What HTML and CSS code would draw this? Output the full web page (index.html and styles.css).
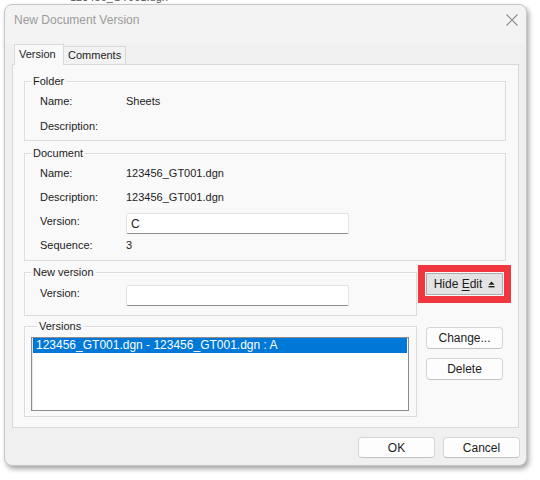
FILE: index.html
```html
<!DOCTYPE html>
<html>
<head>
<meta charset="utf-8">
<title>New Document Version</title>
<link rel="stylesheet" href="styles.css">
</head>
<body>
<div class="desk-text"><span>123456_GT001.dgn</span></div>
<div class="dialog">
  <div class="titlebar">
    <span class="title">New Document Version</span>
    <svg class="close" width="12" height="12" viewBox="0 0 12 12"><path d="M0.5 0.5L11.5 11.5M11.5 0.5L0.5 11.5" stroke="#8c8c8c" stroke-width="1.1" fill="none"/></svg>
  </div>
  <div class="tabs">
    <div class="tab active">Version</div>
    <div class="tab">Comments</div>
  </div>
  <div class="panel">
    <div class="group folder">
      <div class="legend">Folder</div>
      <div class="row h25"><span class="lbl">Name:</span><span class="val">Sheets</span></div>
      <div class="row h25"><span class="lbl">Description:</span><span class="val"></span></div>
    </div>
    <div class="group document">
      <div class="legend">Document</div>
      <div class="row h25"><span class="lbl">Name:</span><span class="val">123456_GT001.dgn</span></div>
      <div class="row h24"><span class="lbl">Description:</span><span class="val">123456_GT001.dgn</span></div>
      <div class="row h24"><span class="lbl">Version:</span><div class="field shifted">C</div></div>
      <div class="row h24"><span class="lbl">Sequence:</span><span class="val">3</span></div>
    </div>
    <div class="lower">
      <div class="group newver">
        <div class="legend">New version</div>
        <div class="row h27"><span class="lbl">Version:</span><div class="field bottom"></div></div>
      </div>
      <div class="side">
        <div class="btn-classic highlighted"><span class="caption">Hide <u>E</u>dit</span><svg class="arrow" width="7" height="7" viewBox="0 0 7 7"><polygon points="3.5,0.5 6.5,3.8 0.5,3.8" fill="#1e1e1e"/><rect x="0.5" y="5" width="6" height="1.4" fill="#1e1e1e"/></svg></div>
      </div>
      <div class="group versions">
        <div class="legend">Versions</div>
        <div class="listbox">
          <div class="item selected">123456_GT001.dgn - 123456_GT001.dgn : A</div>
        </div>
      </div>
      <div class="side stack">
        <div class="btn">Change...</div>
        <div class="btn">Delete</div>
      </div>
    </div>
  </div>
  <div class="footer">
    <div class="btn wide">OK</div>
    <div class="btn wide">Cancel</div>
  </div>
</div>
</body>
</html>
```
FILE: styles.css
```css
html, body {
  margin: 0;
  padding: 0;
}
body {
  width: 540px;
  height: 480px;
  overflow: hidden;
  background: #ffffff;
  font-family: "Liberation Sans", Arial, sans-serif;
  font-size: 11px;
  color: #1c1c1c;
}
.desk-text {
  height: 4px;
  overflow: hidden;
  padding-left: 70px;
  line-height: 14px;
  color: #555;
}
.desk-text span {
  display: block;
  margin-top: -10px;
}
.dialog {
  margin-left: 4px;
  width: 523px;
  height: 462px;
  box-sizing: border-box;
  border: 1px solid #c6c6c6;
  border-radius: 8px;
  background: #f0f0f0;
  box-shadow: 2px 3px 5px rgba(0, 0, 0, 0.35);
  display: flex;
  flex-direction: column;
}
.titlebar {
  height: 39px;
  flex: 0 0 39px;
  display: flex;
  justify-content: space-between;
  align-items: flex-start;
  padding: 0 8px 0 9px;
  border-radius: 8px 8px 0 0;
  background: #f3f3f3;
}
.title {
  margin-top: 7px;
  font-size: 12px;
  line-height: 16px;
  color: #9b9b9b;
}
.close {
  margin-top: 9px;
}
.tabs {
  display: flex;
  align-items: flex-end;
  height: 20px;
  flex: 0 0 20px;
  margin-left: 9px;
}
.tab {
  box-sizing: border-box;
  height: 18px;
  padding: 0 4px;
  line-height: 17px;
  border: 1px solid #d9d9d9;
  border-bottom: none;
  background: #f2f2f2;
  margin-left: -1px;
}
.tab.active {
  height: 21px;
  line-height: 19px;
  margin-left: 0;
  margin-bottom: -1px;
  background: #f9f9f9;
  position: relative;
  z-index: 1;
  width: 50px;
}
.panel {
  box-sizing: border-box;
  margin-left: 7px;
  width: 507px;
  height: 364px;
  flex: 0 0 364px;
  border: 1px solid #d9d9d9;
  background: #f9f9f9;
  padding: 16px 12px 0 11px;
}
.group {
  border: 1px solid #dcdcdc;
  box-shadow: inset 1px 1px 0 #ffffff;
}
.legend {
  width: fit-content;
  height: 14px;
  line-height: 14px;
  margin: -8px 0 0 6px;
  padding: 0 2px;
  background: #f9f9f9;
}
.row {
  display: flex;
  align-items: center;
  padding-left: 15px;
}
.h24 { height: 24px; }
.h25 { height: 25px; }
.h27 { height: 27px; }
.lbl {
  flex: 0 0 86px;
}
.folder {
  padding-bottom: 2px;
  margin-bottom: 12px;
}
.document {
  padding-bottom: 3px;
  margin-bottom: 11px;
}
.field {
  box-sizing: border-box;
  width: 223px;
  height: 21px;
  padding-left: 4px;
  line-height: 20px;
  background: #ffffff;
  border: 1px solid #e2e2e2;
  border-bottom-color: #8f8f8f;
  border-radius: 2px;
  font-size: 12px;
}
.field.shifted {
  margin-top: 5px;
}
.field.bottom {
  align-self: flex-end;
}
.lower {
  display: grid;
  grid-template-columns: 393px 77px;
  column-gap: 9px;
  row-gap: 10px;
}
.newver {
  padding-bottom: 9px;
}
.versions {
  padding: 0 7px 5px 6px;
}
.listbox {
  margin-top: 4px;
  height: 74px;
  box-sizing: border-box;
  background: #ffffff;
  border: 1px solid #8c8c8c;
  box-shadow: inset 1px 1px 0 #e6e6e6;
}
.item {
  margin: 0 1px;
  height: 15px;
  line-height: 15px;
  padding-left: 3px;
  font-size: 12px;
}
.item.selected {
  background: #0078d7;
  color: #ffffff;
}
.side {
  display: flex;
  flex-direction: column;
  padding-top: 1px;
}
.stack {
  gap: 9px;
}
.btn-classic {
  box-sizing: border-box;
  height: 22px;
  display: flex;
  align-items: center;
  justify-content: center;
  gap: 6px;
  background: #e3e3e3;
  border: 1px solid #adadad;
  font-size: 12px;
}
.btn-classic u {
  text-decoration-thickness: 1px;
  text-underline-offset: 2px;
}
.highlighted {
  outline: 7px solid #f2363f;
  outline-offset: 1px;
}
.btn {
  box-sizing: border-box;
  width: 77px;
  height: 22px;
  display: flex;
  align-items: center;
  justify-content: center;
  background: #fdfdfd;
  border: 1px solid #d6d6d6;
  border-bottom-color: #c2c2c2;
  border-radius: 4px;
  font-size: 12px;
}
.footer {
  display: flex;
  justify-content: flex-end;
  gap: 8px;
  padding: 9px 6px 0 0;
}
.btn.wide {
  height: 21px;
}
```
